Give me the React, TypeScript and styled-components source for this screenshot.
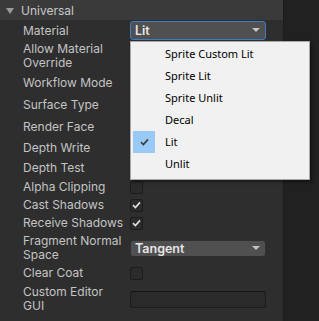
import styled, { createGlobalStyle } from 'styled-components'

const GlobalStyle = createGlobalStyle`
  html, body {
    margin: 0;
    padding: 0;
    background: #2e2e2e;
  }
  body {
    font-family: Inter, "Noto Sans", sans-serif;
    font-size: 12px;
  }
`

const Frame = styled.div`
  display: flex;
  width: 319px;
  height: 321px;
  overflow: hidden;
`

const Panel = styled.div`
  width: 283px;
  background: #2e2e2e;
  display: flex;
  flex-direction: column;
`

const Strip = styled.div`
  flex: 1;
  background: #212121;
  border-left: 1px solid #1b1b1b;
`

const Header = styled.div`
  height: 20px;
  background: #3a3a3a;
  display: flex;
  align-items: center;
  gap: 7px;
  padding-left: 6px;
  color: #c8c8c8;
`

const Fold = styled.span`
  width: 0;
  height: 0;
  border-left: 4px solid transparent;
  border-right: 4px solid transparent;
  border-top: 6px solid #9a9a9a;
  margin-top: 1px;
`

const Rows = styled.div`
  display: flex;
  flex-direction: column;
  padding-left: 23px;
`

const Row = styled.div<{ $h: number }>`
  height: ${p => p.$h}px;
  display: flex;
  align-items: center;
`

const Label = styled.div`
  width: 107px;
  flex-shrink: 0;
  color: #c4c4c4;
  line-height: 14px;
  white-space: nowrap;
`

const Field = styled.div`
  position: relative;
  width: 136px;
`

const Popup = styled.div<{ $focus?: boolean }>`
  height: 17px;
  box-sizing: border-box;
  background: #505050;
  border: 1px solid ${p => (p.$focus ? '#3f7cc4' : '#303030')};
  border-radius: 3px;
  display: flex;
  align-items: center;
  justify-content: space-between;
  padding: 0 5px 0 4px;
  color: #e6e6e6;
  font-weight: 600;
  font-size: 12.5px;
  ${p => (p.$focus ? 'height: 19px; margin-top: -1px;' : '')}
`

const Arrow = styled.span`
  width: 0;
  height: 0;
  margin-left: auto;
  border-left: 4px solid transparent;
  border-right: 4px solid transparent;
  border-top: 4px solid #c4c4c4;
`

const Box = styled.div`
  width: 13px;
  height: 13px;
  box-sizing: border-box;
  background: #2b2b2b;
  border: 1px solid #1c1c1c;
  border-radius: 2px;
  display: flex;
  align-items: center;
  justify-content: center;
`

const TextInput = styled.div`
  width: 136px;
  height: 17px;
  box-sizing: border-box;
  background: #2a2a2a;
  border: 1px solid #1c1c1c;
  border-top-color: #151515;
  border-radius: 3px;
`

const Menu = styled.div`
  position: absolute;
  top: 19px;
  left: 0;
  width: 180px;
  box-sizing: border-box;
  background: #f1f1f1;
  border: 1px solid #a8a8a8;
  box-shadow: 2px 2px 3px rgba(0, 0, 0, 0.45);
  padding: 1px 1px 4px;
  z-index: 2;
  font-family: "Noto Sans", "Open Sans", sans-serif;
  font-size: 11px;
  color: #000;
`

const Item = styled.div`
  height: 22px;
  display: flex;
  align-items: center;
`

const CheckCell = styled.div<{ $on?: boolean }>`
  width: 22px;
  height: 22px;
  margin-left: 1px;
  margin-right: 10px;
  background: ${p => (p.$on ? '#99c9f5' : 'transparent')};
  display: flex;
  align-items: center;
  justify-content: center;
`

const Tick = ({ color }: { color: string }) => (
  <svg width="9" height="8" viewBox="0 0 9 8">
    <path d="M1 4.2 L3.4 6.5 L8 1.4" fill="none" stroke={color} strokeWidth="1.6" />
  </svg>
)

const Check = ({ on }: { on?: boolean }) => <Box>{on && <Tick color="#e0e0e0" />}</Box>

// popups under the open menu are covered, so they carry no text
const Dropdown = ({ value }: { value?: string }) => (
  <Field>
    <Popup>
      {value}
      <Arrow />
    </Popup>
  </Field>
)

const materials = ['Sprite Custom Lit', 'Sprite Lit', 'Sprite Unlit', 'Decal', 'Lit', 'Unlit']

const App = () => {
  return (
    <Frame>
      <GlobalStyle />
      <Panel>
        <Header>
          <Fold />
          Universal
        </Header>
        <Rows>
          <Row $h={21}>
            <Label>Material</Label>
            <Field>
              <Popup $focus>
                Lit
                <Arrow />
              </Popup>
              <Menu>
                {materials.map(m => (
                  <Item key={m}>
                    <CheckCell $on={m === 'Lit'}>{m === 'Lit' && <Tick color="#3c3c3c" />}</CheckCell>
                    {m}
                  </Item>
                ))}
              </Menu>
            </Field>
          </Row>
          <Row $h={30}>
            <Label>
              Allow Material
              <br />
              Override
            </Label>
            <Check />
          </Row>
          <Row $h={23}>
            <Label>Workflow Mode</Label>
            <Dropdown />
          </Row>
          <Row $h={22}>
            <Label>Surface Type</Label>
            <Dropdown />
          </Row>
          <Row $h={21}>
            <Label>Render Face</Label>
            <Dropdown />
          </Row>
          <Row $h={21}>
            <Label>Depth Write</Label>
            <Dropdown />
          </Row>
          <Row $h={20}>
            <Label>Depth Test</Label>
            <Dropdown />
          </Row>
          <Row $h={18}>
            <Label>Alpha Clipping</Label>
            <Check />
          </Row>
          <Row $h={18}>
            <Label>Cast Shadows</Label>
            <Check on />
          </Row>
          <Row $h={18}>
            <Label>Receive Shadows</Label>
            <Check on />
          </Row>
          <Row $h={32}>
            <Label>
              Fragment Normal
              <br />
              Space
            </Label>
            <Dropdown value="Tangent" />
          </Row>
          <Row $h={18}>
            <Label>Clear Coat</Label>
            <Check />
          </Row>
          <Row $h={34}>
            <Label>
              Custom Editor
              <br />
              GUI
            </Label>
            <TextInput />
          </Row>
        </Rows>
      </Panel>
      <Strip />
    </Frame>
  )
}

export default App
